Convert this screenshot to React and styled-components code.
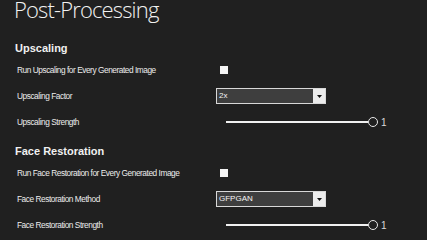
import styled, { createGlobalStyle } from 'styled-components';

const Global = createGlobalStyle`
  html, body {
    margin: 0;
    padding: 0;
    background: #202020;
  }
  body {
    width: 427px;
    height: 240px;
    overflow: hidden;
    font-family: "Liberation Sans", Arial, sans-serif;
  }
`

const Page = styled.div`
  padding: 0 0 0 14px;
  color: #ececec;
`

const Title = styled.h1`
  margin: -4px 0 0 0;
  height: 43px;
  font-family: "Open Sans", "Noto Sans", sans-serif;
  font-weight: 300;
  font-size: 22px;
  letter-spacing: -0.85px;
  line-height: 26px;
  color: #f2f2f2;
`

const Section = styled.section`
  display: flex;
  flex-direction: column;
  & + & {
    margin-top: 7px;
  }
`

const Heading = styled.h2`
  margin: 0 0 0 1px;
  height: 18px;
  line-height: 18px;
  font-size: 11px;
  font-weight: bold;
  color: #f0f0f0;
`

const Row = styled.div`
  display: grid;
  grid-template-columns: 199px 1fr;
  align-items: center;
  height: 26px;
  padding-left: 3px;
`

const Label = styled.span`
  font-size: 8.3px;
  letter-spacing: -0.45px;
  color: #ececec;
  white-space: nowrap;
`

const Check = styled.span`
  display: block;
  width: 8px;
  height: 8px;
  margin-left: 4px;
  background: #f4f4f4;
`

const Combo = styled.div`
  display: flex;
  align-items: stretch;
  width: 110px;
  height: 16px;
  box-sizing: border-box;
  border: 1px solid #d8d8d8;
  background: #3e3e3e;
`

const ComboText = styled.span`
  flex: 1;
  padding-left: 2px;
  font-size: 8px;
  line-height: 14px;
  color: #f4f4f4;
`

const ComboButton = styled.span`
  display: flex;
  align-items: center;
  justify-content: center;
  width: 12px;
  background: #ececec;
`

const Slider = styled.div`
  display: flex;
  align-items: center;
  margin-left: 10px;
`

const Track = styled.div`
  width: 142px;
  height: 2px;
  background: #f0f0f0;
`

const Thumb = styled.span`
  width: 8px;
  height: 8px;
  border: 1.5px solid #e8e8e8;
  border-radius: 50%;
  background: #202020;
`

const Value = styled.span`
  margin-left: 3px;
  font-size: 10px;
  color: #d8d8d8;
`

const Arrow = () => (
  <svg width="5" height="3" viewBox="0 0 5 3">
    <path d="M0 0 H5 L2.5 3 Z" fill="#111" />
  </svg>
)

const Dropdown = ({ value }) => (
  <Combo>
    <ComboText>{value}</ComboText>
    <ComboButton><Arrow /></ComboButton>
  </Combo>
)

const Strength = ({ value }) => (
  <Slider>
    <Track />
    <Thumb />
    <Value>{value}</Value>
  </Slider>
)

const App = () => (
  <Page>
    <Global />
    <Title>Post-Processing</Title>
    <Section>
      <Heading>Upscaling</Heading>
      <Row>
        <Label>Run Upscaling for Every Generated Image</Label>
        <Check />
      </Row>
      <Row>
        <Label>Upscaling Factor</Label>
        <Dropdown value="2x" />
      </Row>
      <Row>
        <Label>Upscaling Strength</Label>
        <Strength value="1" />
      </Row>
    </Section>
    <Section>
      <Heading>Face Restoration</Heading>
      <Row>
        <Label>Run Face Restoration for Every Generated Image</Label>
        <Check />
      </Row>
      <Row>
        <Label>Face Restoration Method</Label>
        <Dropdown value="GFPGAN" />
      </Row>
      <Row>
        <Label>Face Restoration Strength</Label>
        <Strength value="1" />
      </Row>
    </Section>
  </Page>
)

export default App;
